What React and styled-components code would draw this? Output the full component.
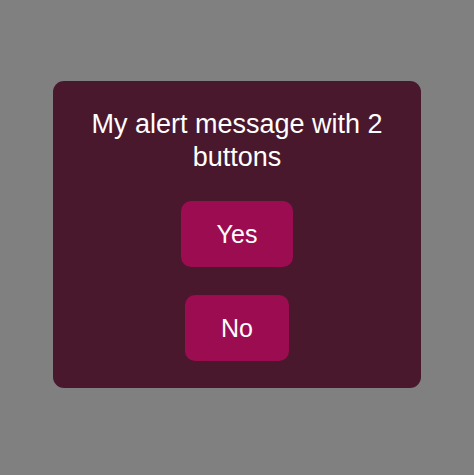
import React from "react";
import styled, { createGlobalStyle } from "styled-components";

const Global = createGlobalStyle`
  html, body { margin: 0; padding: 0; }
  body {
    background: #808080;
    font-family: "Liberation Sans", Arial, sans-serif;
  }
`;

const Screen = styled.div`
  width: 474px;
  height: 475px;
  display: flex;
  justify-content: center;
  padding-top: 81px;
  box-sizing: border-box;
`;

const Card = styled.div`
  width: 368px;
  height: 307px;
  box-sizing: border-box;
  background: #4a182d;
  border-radius: 11px;
  padding: 27px 24px 0;
  display: flex;
  flex-direction: column;
  align-items: center;
`;

const Message = styled.div`
  color: #ffffff;
  font-size: 27px;
  line-height: 33px;
  text-align: center;
  margin-bottom: 27px;
`;

const Buttons = styled.div`
  display: flex;
  flex-direction: column;
  align-items: center;
  gap: 28px;
`;

const Button = styled.button`
  height: 66px;
  padding: 0 36px;
  border: none;
  border-radius: 10px;
  background: #9c0c50;
  color: #ffffff;
  font-family: "Liberation Sans", Arial, sans-serif;
  font-size: 25px;
  cursor: pointer;
`;

export default function App() {
  return (
    <>
      <Global />
      <Screen>
        <Card>
          <Message>My alert message with 2 buttons</Message>
          <Buttons>
            <Button>Yes</Button>
            <Button>No</Button>
          </Buttons>
        </Card>
      </Screen>
    </>
  );
}
